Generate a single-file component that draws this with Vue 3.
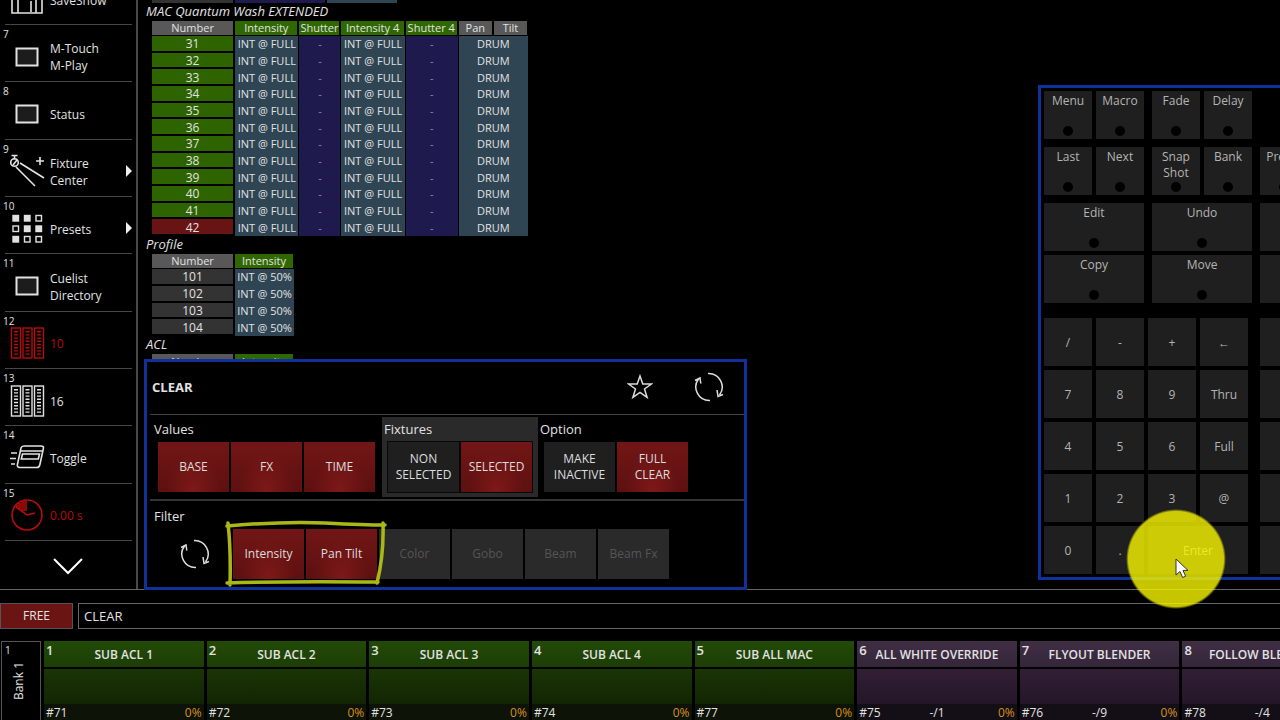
<template>
  <div class="console">
    <main class="workspace">
      <nav class="sidebar">
        <div v-for="item in menu" :key="item.label" class="menu-item" :class="{ alert: item.alert }">
          <span class="menu-number">{{ item.number }}</span>
          <button class="menu-button">
            <svg class="menu-icon" viewBox="0 0 36 36" fill="none" stroke="currentColor">
              <g v-if="item.icon === 'save'" stroke-width="1.6">
                <path d="M3 1h30v30H3zM9 31V17h18v14M22 19v11" />
              </g>
              <g v-else-if="item.icon === 'window'">
                <rect x="7.500" y="9.500" width="21" height="17" fill="#1c1c1c" stroke-width="2" />
              </g>
              <g v-else-if="item.icon === 'fixture'" stroke-width="1.6">
                <path d="M2.500 2.500h6M5.500 2.500v4M11 10l24 15M7 14l19 19M27 8h8M31 4v8" />
                <circle cx="5.500" cy="9.500" r="3.800" />
                <path d="M4 12l4-5" />
              </g>
              <g v-else-if="item.icon === 'presets'" stroke-width="1.4">
                <rect
                  v-for="n in 9"
                  :key="n"
                  :x="4 + ((n - 1) % 3) * 11.5"
                  :y="4.5 + Math.floor((n - 1) / 3) * 10.5"
                  width="5.5"
                  height="5.5"
                  :fill="[1, 2, 5, 6, 7].includes(n) ? 'currentColor' : 'none'"
                />
              </g>
              <g v-else-if="item.icon === 'faders'" stroke-width="1.4">
                <g v-for="n in 3" :key="n">
                  <rect :x="n * 11.5 - 9" y="3" width="9" height="30" />
                  <path :d="`M${n * 11.5 - 4.5} 6v24`" stroke-width="4" stroke-dasharray="1.4 1.8" />
                </g>
              </g>
              <g v-else-if="item.icon === 'toggle'" stroke-width="1.6">
                <path d="M12 8q.6-2 3-2h17q3 0 2.400 2.500l-3.500 16q-.6 3-3 3h-17q-3 0-2.500-3zM12 11h22M13.500 14h17l-1.200 5h-17z" />
                <path d="M2 13h6M1 18.500h6M2 24h4" />
              </g>
              <g v-else-if="item.icon === 'clock'" stroke-width="1.6">
                <circle cx="18" cy="18" r="15" />
                <path d="M12 5h6M9 7h9M7 9h11M9 11h9M12 13h6M7 10l11 8 8-2" />
              </g>
            </svg>
            <span class="menu-label">{{ item.label }}</span>
          </button>
          <span v-if="item.submenu" class="menu-arrow"></span>
        </div>
        <button class="scroll-down" aria-label="Scroll down">
          <svg width="32" height="18" viewBox="0 0 32 18" fill="none" stroke="#fff" stroke-width="2">
            <path d="M2 2l14 14L30 2" />
          </svg>
        </button>
      </nav>

      <section class="content">
        <div class="fixtures">
          <div class="cut-row">
            <span></span><span></span><span></span>
          </div>
          <h2>MAC Quantum Wash EXTENDED</h2>
          <table class="wash">
            <colgroup>
              <col class="c-number" /><col class="c-intensity" /><col class="c-shutter" />
              <col class="c-intensity" /><col class="c-shutter4" /><col class="c-pan" /><col class="c-pan" />
            </colgroup>
            <thead>
              <tr>
                <th>Number</th>
                <th class="on">Intensity</th>
                <th class="on">Shutter</th>
                <th class="on">Intensity 4</th>
                <th class="on">Shutter 4</th>
                <th>Pan</th>
                <th>Tilt</th>
              </tr>
            </thead>
            <tbody>
              <tr v-for="n in 12" :key="n">
                <td class="number" :class="n === 12 ? 'red' : 'green'">{{ n + 30 }}</td>
                <td class="value">INT @ FULL</td>
                <td class="beam">-</td>
                <td class="value">INT @ FULL</td>
                <td class="beam">-</td>
                <td class="value" colspan="2">DRUM</td>
              </tr>
            </tbody>
          </table>
          <h2>Profile</h2>
          <table class="profile">
            <colgroup><col class="c-number" /><col class="c-narrow" /></colgroup>
            <thead>
              <tr><th>Number</th><th class="on">Intensity</th></tr>
            </thead>
            <tbody>
              <tr v-for="n in 4" :key="n">
                <td class="number">{{ n + 100 }}</td>
                <td class="value">INT @ 50%</td>
              </tr>
            </tbody>
          </table>
          <h2>ACL</h2>
          <table class="profile acl">
            <colgroup><col class="c-number" /><col class="c-narrow" /></colgroup>
            <thead>
              <tr><th>Number</th><th class="on">Intensity</th></tr>
            </thead>
          </table>
        </div>

        <section class="clear-panel">
          <header class="clear-header">
            <h1>CLEAR</h1>
            <button class="icon-button" aria-label="Favourite">
              <svg width="26" height="26" viewBox="0 0 26 26" fill="none" stroke="#ddd" stroke-width="1.5">
                <path d="M13 2l2.800 8h8.700l-7 5 2.600 8.400L13 18.300l-7.100 5.100L8.500 15l-7-5h8.700z" />
              </svg>
            </button>
            <button class="icon-button" aria-label="Reset">
              <svg class="cycle" viewBox="0 0 30 30"><path :d="cyclePath" /></svg>
            </button>
          </header>
          <div class="clear-row">
            <div class="group values">
              <h3>Values</h3>
              <div class="buttons">
                <button class="tile active">BASE</button>
                <button class="tile active">FX</button>
                <button class="tile active">TIME</button>
              </div>
            </div>
            <div class="group selection">
              <h3>Fixtures</h3>
              <div class="buttons">
                <button class="tile">NON SELECTED</button>
                <button class="tile active">SELECTED</button>
              </div>
            </div>
            <div class="group option">
              <h3>Option</h3>
              <div class="buttons">
                <button class="tile">MAKE INACTIVE</button>
                <button class="tile active">FULL CLEAR</button>
              </div>
            </div>
          </div>
          <div class="filter-row">
            <h3>Filter</h3>
            <div class="buttons">
              <button class="icon-button reset" aria-label="Reset filter">
                <svg class="cycle" viewBox="0 0 30 30"><path :d="cyclePath" /></svg>
              </button>
              <button
                v-for="filter in filters"
                :key="filter.name"
                class="tile"
                :class="filter.active ? 'active' : 'off'"
                :disabled="!filter.active"
              >
                {{ filter.name }}
              </button>
            </div>
          </div>
          <svg class="marker" viewBox="0 0 164 68" fill="none" stroke="#aab817" stroke-width="3.500" stroke-linecap="round">
            <path d="M2 6Q60 1 100 3T160 5M3 3Q6 30 5 65M2 63Q60 61 153 62M158 3Q159 35 152 63" />
          </svg>
        </section>
      </section>

      <aside class="keypad">
        <div v-for="(row, i) in functionRows" :key="i" class="key-row" :class="{ tight: i === 2 }">
          <div v-for="(pair, j) in row" :key="j" class="key-pair">
            <button v-for="(key, k) in pair" :key="k" class="key function" :class="{ wide: pair.length === 1 }">
              {{ key }}<span class="led"></span>
            </button>
          </div>
        </div>
        <div class="digits">
          <div v-for="(row, i) in digitRows" :key="i" class="digit-row">
            <button v-for="key in row" :key="key" class="key" :class="{ enter: key === 'Enter' }">{{ key }}</button>
            <button class="key side" aria-label="Side key"></button>
          </div>
        </div>
      </aside>
    </main>

    <form class="command" @submit.prevent>
      <button type="button" class="free">FREE</button>
      <input v-model="command" aria-label="Command line" />
    </form>

    <footer class="playbacks">
      <button class="bank"><span class="bank-number">1</span><span class="bank-name">Bank 1</span></button>
      <div class="faders">
        <article v-for="(p, i) in playbacks" :key="p.id" class="fader" :class="{ purple: p.cue }">
          <div class="fader-title"><b>{{ i + 1 }}</b><span>{{ p.name }}</span></div>
          <div class="fader-body"></div>
          <div class="fader-foot">
            <span>#{{ p.id }}</span><span>{{ p.cue }}</span><span class="level">0%</span>
          </div>
        </article>
      </div>
    </footer>

    <div class="halo"></div>
    <svg class="cursor" width="14" height="22" viewBox="0 0 14 22">
      <path d="M1 1v16l4-3.500 2.600 6 3-1.300L8 12.400h5z" fill="#fff" stroke="#333" />
    </svg>
  </div>
</template>

<script setup>
import { ref } from 'vue'

const command = ref('CLEAR')

const cyclePath =
  'M14 1.500A13.500 13.500 0 0 1 25.500 23M16 28.500A13.500 13.500 0 0 1 4.500 7M1 8.500l5-2.500.8 5.500M23 18l1 6.500 5-2'

const menu = [
  { number: '', label: 'SaveShow', icon: 'save' },
  { number: 7, label: 'M-Touch\nM-Play', icon: 'window' },
  { number: 8, label: 'Status', icon: 'window' },
  { number: 9, label: 'Fixture\nCenter', icon: 'fixture', submenu: true },
  { number: 10, label: 'Presets', icon: 'presets', submenu: true },
  { number: 11, label: 'Cuelist\nDirectory', icon: 'window' },
  { number: 12, label: '10', icon: 'faders', alert: true },
  { number: 13, label: '16', icon: 'faders' },
  { number: 14, label: 'Toggle', icon: 'toggle' },
  { number: 15, label: '0.00 s', icon: 'clock', alert: true }
]

const filters = [
  { name: 'Intensity', active: true },
  { name: 'Pan Tilt', active: true },
  { name: 'Color' },
  { name: 'Gobo' },
  { name: 'Beam' },
  { name: 'Beam Fx' }
]

const functionRows = [
  [['Menu', 'Macro'], ['Fade', 'Delay']],
  [['Last', 'Next'], ['Snap Shot', 'Bank'], ['Preset', '']],
  [['Edit'], ['Undo'], ['']],
  [['Copy'], ['Move'], ['']]
]

const digitRows = [
  ['/', '-', '+', '←'],
  ['7', '8', '9', 'Thru'],
  ['4', '5', '6', 'Full'],
  ['1', '2', '3', '@'],
  ['0', '.', 'Enter']
]

const playbacks = [
  { id: 71, name: 'SUB ACL 1' },
  { id: 72, name: 'SUB ACL 2' },
  { id: 73, name: 'SUB ACL 3' },
  { id: 74, name: 'SUB ACL 4' },
  { id: 77, name: 'SUB ALL MAC' },
  { id: 75, name: 'ALL WHITE OVERRIDE', cue: '-/1' },
  { id: 76, name: 'FLYOUT BLENDER', cue: '-/9' },
  { id: 78, name: 'FOLLOW BLENDER', cue: '-/4' }
]
</script>

<style>
body {
  margin: 0;
  background: #000;
}
</style>

<style scoped>
.console {
  position: relative;
  display: flex;
  flex-direction: column;
  height: 100vh;
  overflow: hidden;
  background: #000;
  color: #e2e2e2;
  font-family: 'Open Sans', 'Noto Sans', sans-serif;
  font-size: 13px;
  line-height: 16px;
}

.console * {
  box-sizing: border-box;
}

button,
input {
  margin: 0;
  padding: 0;
  border: none;
  border-radius: 0;
  background: none;
  color: inherit;
  font: inherit;
}

h1,
h2,
h3 {
  margin: 0;
  font-size: 13px;
  font-weight: 400;
}

.workspace {
  flex: 1;
  min-height: 0;
  display: flex;
  border-bottom: 1px solid #666;
}

/* sidebar */
.sidebar {
  flex: 0 0 138px;
  display: grid;
  grid-template-rows: 25px repeat(9, 1fr) 48px;
  border-right: 2px solid #484848;
  overflow: hidden;
  font-size: 12px;
  font-weight: 500;
}

.menu-item {
  position: relative;
  display: flex;
  align-items: flex-end;
  margin: 0 4px 0 5px;
  border-bottom: 1px solid #484848;
  min-height: 0;
}

.menu-number {
  position: absolute;
  top: 1px;
  left: -2px;
  font-size: 10px;
}

.menu-button {
  display: flex;
  align-items: center;
  gap: 5px;
  margin-left: 4px;
  height: 49px;
  text-align: left;
}

.menu-icon {
  width: 36px;
  height: 36px;
}

.menu-label {
  padding-top: 1px;
  line-height: 17px;
  white-space: pre-line;
}

.alert .menu-button {
  color: #b80c0c;
}

.menu-arrow {
  position: absolute;
  right: 0;
  bottom: 19px;
  border: 6px solid transparent;
  border-left-color: #eee;
  border-right-width: 0;
}

.scroll-down {
  display: flex;
  align-items: center;
  justify-content: center;
  padding-top: 3px;
}

/* fixture tables */
.content {
  position: relative;
  flex: 1;
  min-width: 0;
}

.fixtures {
  padding-left: 14px;
  font-size: 11px;
  font-weight: 500;
}

.fixtures h2 {
  margin-left: -6px;
  height: 18px;
  line-height: 17px;
  font-style: italic;
  white-space: nowrap;
}

.cut-row {
  display: flex;
  gap: 2px;
  height: 3px;
}

.cut-row span {
  width: 81px;
  background: #333;
}

.cut-row span + span {
  width: 90px;
  background: #1e1a4e;
}

.cut-row span + span + span {
  width: 70px;
  background: #2f4554;
}

table {
  table-layout: fixed;
  border-spacing: 0;
  line-height: 14px;
  text-align: center;
  white-space: nowrap;
}

.wash {
  width: 377px;
  height: 215px;
}

.profile {
  width: 143px;
  height: 82px;
}

.acl {
  height: 16px;
}

.c-number {
  width: 83px;
}

.c-intensity {
  width: 64px;
}

.c-shutter {
  width: 42px;
}

.c-shutter4 {
  width: 53px;
}

.c-pan {
  width: 35px;
}

.c-narrow {
  width: 60px;
}

th,
td {
  padding: 0;
  border-right: 2px solid #000;
}

th {
  background: #585858;
  font-weight: 500;
  border-bottom: 1px solid #000;
}

th.on {
  background-color: #2f6800;
}

td.number {
  padding-top: 1px;
  background: #333;
  border-bottom: 2px solid #000;
  font-size: 12px;
  line-height: 13px;
}

td.green {
  background: #2d6400;
}

td.red {
  background: #691414;
}

td.value {
  background: #2f4554;
  border-right-width: 1px;
}

td.beam {
  background: #1e1a4e;
  border-right-width: 1px;
  color: #8c8ca4;
}

/* clear dialog */
.clear-panel {
  position: absolute;
  left: 6px;
  bottom: -1px;
  width: 603px;
  height: 231px;
  padding-left: 3px;
  border: 3px solid #10309a;
  background: #000;
}

.clear-header {
  display: flex;
  align-items: center;
  height: 53px;
  padding: 0 20px 2px 2px;
  border-bottom: 1px solid #444;
}

.clear-header h1 {
  flex: 1;
  font-weight: 700;
}

.icon-button {
  display: flex;
  align-items: center;
  justify-content: center;
}

.icon-button + .icon-button {
  margin-left: 41px;
}

.cycle {
  width: 30px;
  height: 30px;
  fill: none;
  stroke: #ddd;
  stroke-width: 1.5;
}

.clear-row {
  display: flex;
  height: 86px;
  padding: 2px 0;
  border-bottom: 2px solid #333;
}

.group {
  padding-top: 4px;
}

.group h3,
.filter-row h3 {
  margin-bottom: 5px;
  line-height: 16px;
}

.values {
  width: 232px;
  padding-left: 4px;
}

.values .buttons {
  padding-left: 4px;
}

.selection {
  width: 156px;
  padding-left: 2px;
  background: #2a2a2a;
}

.selection .buttons,
.option .buttons {
  padding-left: 4px;
}

.option {
  padding-left: 2px;
}

.buttons {
  display: flex;
  gap: 2px;
}

.tile {
  width: 71px;
  height: 50px;
  padding: 0 4px;
  background: #1f1f1f;
  color: #ddd;
  font-size: 12px;
  font-weight: 500;
}

.selection .tile {
  outline: 1px solid #080808;
}

.tile.active {
  background:
    radial-gradient(ellipse at 50% 100%, rgba(140, 28, 28, 0.7), transparent 55%),
    linear-gradient(#721616, #5e1010);
}

.tile.off {
  background: #2a2a2a;
  color: #555;
}

.filter-row {
  padding: 7px 0 0 4px;
}

.reset {
  width: 77px;
  padding-left: 4px;
}

.marker {
  position: absolute;
  left: 78px;
  top: 158px;
  width: 164px;
  height: 68px;
}

/* keypad */
.keypad {
  flex: 0 0 242px;
  align-self: flex-end;
  margin-bottom: 9px;
  padding: 3px 0 3px 3px;
  border: 3px solid #10309a;
  border-right: none;
  background: #000;
  overflow: hidden;
}

.key-row {
  display: flex;
  gap: 8px;
  margin-bottom: 8px;
}

.key-row.tight {
  margin-bottom: 4px;
}

.key-pair {
  display: flex;
  flex: none;
  gap: 4px;
}

.key {
  flex: none;
  width: 48px;
  height: 48px;
  padding-top: 2px;
  background: #1f1f1f;
  color: #b4b4b4;
  font-size: 12px;
  font-weight: 500;
}

.key.function {
  display: flex;
  position: relative;
  justify-content: center;
}

.key.wide,
.key.enter {
  width: 100px;
}

.led {
  position: absolute;
  left: calc(50% - 5px);
  bottom: 3px;
  width: 10px;
  height: 10px;
  border-radius: 50%;
  background: #000;
}

.digits {
  display: grid;
  gap: 4px;
  padding-top: 7px;
}

.digit-row {
  display: flex;
  gap: 4px;
}

.key.side {
  margin-left: 8px;
}

/* command line */
.command {
  display: flex;
  gap: 5px;
  height: 26px;
  margin: 13px 0 12px;
}

.free {
  width: 73px;
  border: 1px solid #555;
  background: #6a1414;
  font-size: 12px;
  font-weight: 500;
}

.command input {
  flex: 1;
  padding: 0 5px;
  border: 1px solid #666;
  border-right: none;
}

/* playbacks */
.playbacks {
  display: flex;
  gap: 3px;
  height: 79px;
  padding-left: 1px;
}

.bank {
  position: relative;
  flex: 0 0 40px;
  display: flex;
  align-items: center;
  justify-content: center;
  padding-right: 4px;
  border: 1px solid #555;
  border-bottom: none;
}

.bank-number {
  position: absolute;
  top: 0;
  left: 3px;
  font-size: 10px;
}

.bank-name {
  writing-mode: vertical-rl;
  transform: rotate(180deg);
  font-size: 12px;
  font-weight: 500;
}

.faders {
  flex: 1;
  display: grid;
  grid-template-columns: repeat(8, minmax(0, 1fr));
  gap: 3px;
  margin-right: -62px;
}

.fader {
  display: flex;
  flex-direction: column;
  font-size: 12px;
  font-weight: 500;
}

.fader-title {
  position: relative;
  height: 26px;
  margin-bottom: 2px;
  background: linear-gradient(#224a06, #1d3d06);
  font-weight: 600;
  line-height: 27px;
  text-align: center;
}

.fader-title b {
  position: absolute;
  top: 1px;
  left: 2px;
  font-size: 13px;
  font-weight: 600;
  line-height: 16px;
}

.fader-body {
  flex: 1;
  background: linear-gradient(#1a3505, #122503);
}

.fader-foot {
  display: grid;
  grid-template-columns: 1fr 1fr 1fr;
  height: 16px;
  padding: 0 2px;
  background: #0d1306;
  line-height: 17px;
  text-align: center;
}

.fader-foot span:first-child {
  text-align: left;
}

.fader-foot .level {
  color: #d8901c;
  text-align: right;
}

.purple .fader-title {
  background: linear-gradient(#402e44, #35263a);
}

.purple .fader-body {
  background: linear-gradient(#321f35, #241628);
}

.purple .fader-foot {
  background: #140f16;
}

/* pointer highlight */
.halo {
  position: absolute;
  right: 54px;
  bottom: 111px;
  width: 100px;
  height: 100px;
  border-radius: 50%;
  background: radial-gradient(closest-side, rgba(248, 246, 0, 0.8) 95%, transparent);
}

.cursor {
  position: absolute;
  right: 91px;
  bottom: 140px;
}
</style>
